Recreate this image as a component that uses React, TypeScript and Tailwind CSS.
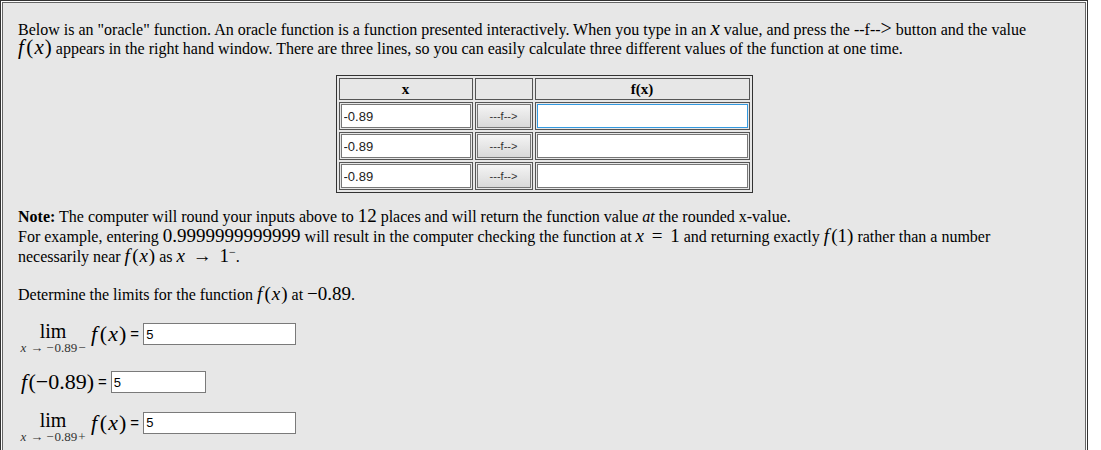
function M({
  children,
  size = "text-[19px]",
  lead = "leading-[0]",
}: {
  children: React.ReactNode;
  size?: string;
  lead?: string;
}) {
  return <span className={`${size} ${lead} font-['Liberation_Serif',serif]`}>{children}</span>;
}

function I({ children }: { children: React.ReactNode }) {
  return <i className="italic">{children}</i>;
}

// f(x) with a bit of extra side bearing so it reads like TeX math
function Fx({ size = "text-[19px]", lead }: { size?: string; lead?: string }) {
  return (
    <M size={size} lead={lead}>
      <I>f</I>
      <span className="ml-[0.12em]">(</span>
      <span className="mx-[0.05em]">
        <I>x</I>
      </span>
      )
    </M>
  );
}

function Eq() {
  return <span className="mx-[4px] font-['Liberation_Sans',sans-serif] text-[15px]">=</span>;
}

function Answer({ w }: { w: string }) {
  return (
    <input
      readOnly
      value="5"
      className={`h-[22px] ${w} border border-[#7a7a7a] bg-white px-[2px] font-['Liberation_Sans',sans-serif] text-[13px] text-black outline-none`}
    />
  );
}

function Lim({ side }: { side: string }) {
  return (
    <div className="flex items-start">
      <div className="flex w-[70px] flex-col items-center font-['Liberation_Serif',serif]">
        <span className="text-[20px] leading-[20px]">lim</span>
        <span className="whitespace-nowrap text-[13px] leading-[14px] text-[#333]">
          <i className="mr-[1px]">x</i>
          <span className="mx-[3px]">→</span>
          <span className="mr-[1px]">−</span>0.89
          <span className="ml-[1px]">{side}</span>
        </span>
      </div>
      <div className="ml-[3px] flex items-center pt-[2px]">
        <Fx size="text-[22px]" lead="leading-none" />
        <Eq />
        <Answer w="w-[153px]" />
      </div>
    </div>
  );
}

function Row({ focused }: { focused?: boolean }) {
  return (
    <tr>
      <td className="border border-[#555] p-px">
        <input
          readOnly
          value="-0.89"
          className="block h-[24px] w-[130px] border border-[#777] bg-white px-[2px] font-['Liberation_Sans',sans-serif] text-[13px] text-[#222] outline-none"
        />
      </td>
      <td className="border border-[#555] p-px">
        <button className="block h-[24px] w-[54px] border border-[#777] bg-gradient-to-b from-[#f4f4f4] to-[#d9d9d9] font-['Liberation_Sans',sans-serif] text-[11px] text-[#333]">
          ---f--&gt;
        </button>
      </td>
      <td className="border border-[#555] p-px">
        <input
          readOnly
          className={
            focused
              ? "block h-[24px] w-[211px] border border-[#3399e0] bg-white outline-none"
              : "block h-[24px] w-[211px] border border-[#777] bg-white outline-none"
          }
        />
      </td>
    </tr>
  );
}

export default function App() {
  return (
    <div className="w-[1088px] border border-[#333] bg-white p-px">
      <div className="border border-[#666] bg-[#e7e7e7] px-[15px] pt-[17px] pb-[20px] text-[16px] text-black font-['Liberation_Serif',serif]">
        <p className="leading-[19px]">
          Below is an "oracle" function. An oracle function is a function presented interactively. When you type in an{" "}
          <M size="text-[21px]">
            <I>x</I>
          </M>{" "}
          value, and press the --f--<M size="text-[20px]">&gt;</M> button and the value
          <br />
          <Fx size="text-[21px]" /> appears in the right hand window. There are three lines, so you can easily calculate
          three different values of the function at one time.
        </p>

        <div className="mt-[17px] flex justify-center">
          <table className="border-separate border-spacing-[2px] border border-[#333]">
            <thead>
              <tr>
                <th className="h-[22px] border border-[#555] text-[15px] leading-[17px] font-bold">x</th>
                <th className="border border-[#555]"></th>
                <th className="border border-[#555] text-[15px] leading-[17px] font-bold">f(x)</th>
              </tr>
            </thead>
            <tbody>
              <Row focused />
              <Row />
              <Row />
            </tbody>
          </table>
        </div>

        <div className="mt-[14px] leading-[20px]">
          <p>
            <b>Note:</b> The computer will round your inputs above to <M>12</M> places and will return the function
            value <i>at</i> the rounded x-value.
            <br />
            For example, entering <M>0.9999999999999</M> will result in the computer checking the function at{" "}
            <M>
              <I>x</I> <span className="mx-[3px]">=</span> 1
            </M>{" "}
            and returning exactly{" "}
            <M>
              <I>f</I>
              <span className="ml-[0.12em]">(1)</span>
            </M>{" "}
            rather than a number
            <br />
            necessarily near <Fx /> as{" "}
            <M>
              <I>x</I> <span className="mx-[3px]">→</span> 1<sup className="text-[12px] leading-[0]">−</sup>
            </M>
            .
          </p>
        </div>

        <p className="mt-[18px] leading-[20px]">
          Determine the limits for the function <Fx /> at <M>−0.89</M>.
        </p>

        <div className="mt-[16px] flex flex-col">
          <Lim side="−" />
          <div className="mt-[16px] flex items-center pl-[3px]">
            <M size="text-[22px]" lead="leading-none">
              <I>f</I>
              <span className="ml-[0.06em]">(−0.89)</span>
            </M>
            <Eq />
            <Answer w="w-[95px]" />
          </div>
          <div className="mt-[16px]">
            <Lim side="+" />
          </div>
        </div>
      </div>
    </div>
  );
}
